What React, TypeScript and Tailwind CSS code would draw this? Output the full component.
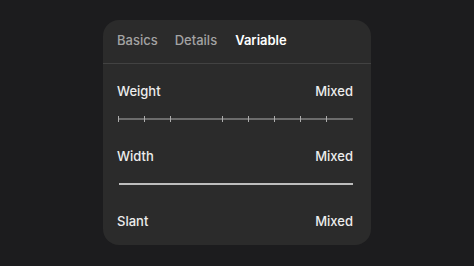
export default function App() {
  const ticks = [0.5, 26.5, 52.5, 104.5, 130.5, 156.5, 182.5, 208.5]

  return (
    <div
      className="w-[474px] h-[266px] bg-[#1c1c1e] pt-[20px] pl-[103px]"
      style={{ fontFamily: 'Inter, "Noto Sans", sans-serif' }}
    >
      <div className="w-[268px] h-[225px] bg-[#2b2b2b] rounded-[16px] flex flex-col">
        {/* Tabs */}
        <div className="h-[44px] flex items-center gap-[17px] pl-[14px] pb-[1px] border-b border-[#424242] text-[13px]">
          <span className="text-[#a3a3a3] font-medium">Basics</span>
          <span className="text-[#a3a3a3] font-medium">Details</span>
          <span className="text-white font-semibold ml-[1px]">Variable</span>
        </div>

        <div className="flex flex-col pl-[14px] pr-[18px] pt-[20px] text-[13px] font-medium text-[#ededed]">
          {/* Weight */}
          <div className="h-[16px] flex items-center justify-between">
            <span>Weight</span>
            <span>Mixed</span>
          </div>
          <div className="mt-[15px] h-[8px] pl-[1px]">
            <svg width="236" height="8" viewBox="0 0 236 8">
              <line x1="0" y1="4" x2="235" y2="4" stroke="#adadad" strokeWidth="1.2" />
              {ticks.map((x) => (
                <line key={x} x1={x} y1="1" x2={x} y2="7" stroke="#adadad" strokeWidth="1" />
              ))}
            </svg>
          </div>

          {/* Width */}
          <div className="mt-[26px] h-[16px] flex items-center justify-between">
            <span>Width</span>
            <span>Mixed</span>
          </div>
          <div className="mt-[15px] h-[8px] flex items-center pl-[2px]">
            <div className="w-[234px] h-[1.5px] bg-[#bdbdbd]" />
          </div>

          {/* Slant */}
          <div className="mt-[26px] h-[16px] flex items-center justify-between">
            <span>Slant</span>
            <span>Mixed</span>
          </div>
        </div>
      </div>
    </div>
  )
}
